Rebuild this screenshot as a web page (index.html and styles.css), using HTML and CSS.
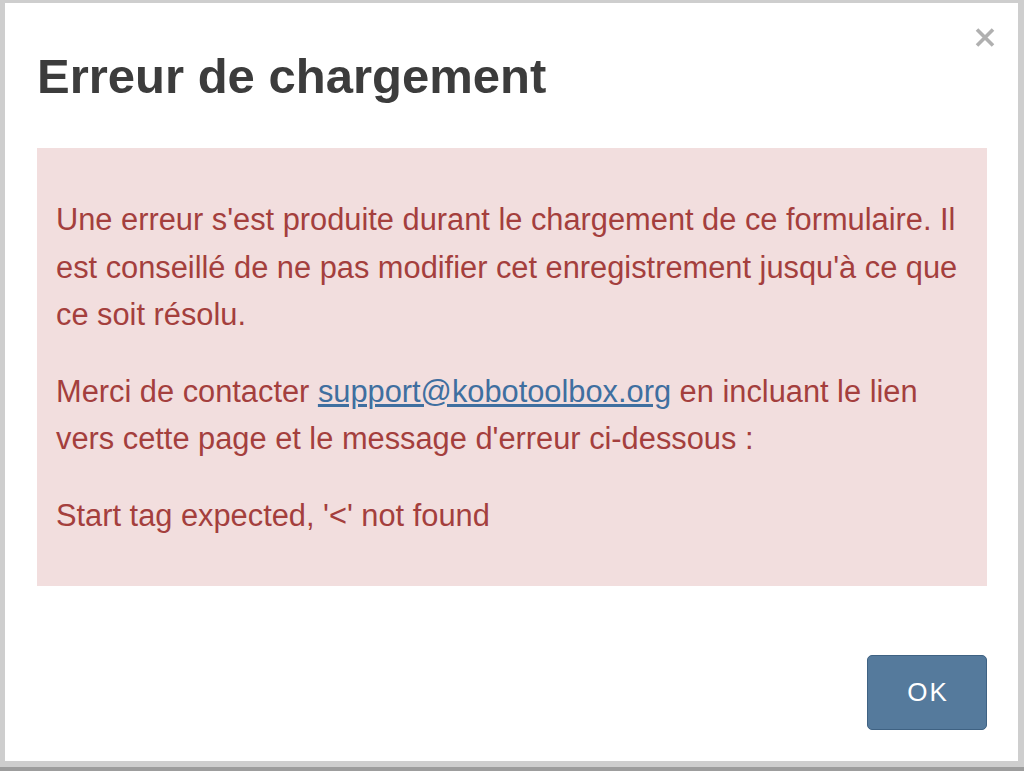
FILE: index.html
```html
<!DOCTYPE html>
<html lang="fr">
<head>
<meta charset="utf-8">
<title>Erreur de chargement</title>
<link rel="stylesheet" href="styles.css">
</head>
<body>
<div class="screen">
  <div class="dialog">
    <button class="close" aria-label="Fermer">
      <svg width="20" height="19" viewBox="0 0 20 19"><path d="M2 1.5 L18 17.5 M18 1.5 L2 17.5" stroke="#b0b0b0" stroke-width="3.6" fill="none"/></svg>
    </button>
    <h1 class="title">Erreur de chargement</h1>
    <div class="alert">
      <p>Une erreur s'est produite durant le chargement de ce formulaire. Il est conseillé de ne pas modifier cet enregistrement jusqu'à ce que ce soit résolu.</p>
      <p>Merci de contacter <a href="#">support@kobotoolbox.org</a> en incluant le lien vers cette page et le message d'erreur ci-dessous :</p>
      <p>Start tag expected, '&lt;' not found</p>
    </div>
    <div class="footer">
      <button class="ok">OK</button>
    </div>
  </div>
</div>
</body>
</html>
```
FILE: styles.css
```css
html, body {
  margin: 0;
  padding: 0;
}
body {
  width: 1024px;
  height: 771px;
  overflow: hidden;
  font-family: "Liberation Sans", Arial, sans-serif;
}
.screen {
  box-sizing: border-box;
  height: 771px;
  background: #cecece;
  border-bottom: 4px solid #9d9d9d;
  padding: 3px 6px 0 5px;
}
.dialog {
  position: relative;
  box-sizing: border-box;
  height: 758px;
  background: #ffffff;
  padding: 0 31px 0 32px;
  display: flex;
  flex-direction: column;
}
.close {
  position: absolute;
  top: 25px;
  right: 23px;
  border: 0;
  background: none;
  padding: 0;
  width: 20px;
  height: 19px;
  cursor: pointer;
}
.close svg { display: block; }
.title {
  margin: 42px 0 0 0;
  font-size: 49px;
  line-height: 63px;
  font-weight: bold;
  color: #3c3c3c;
}
.alert {
  margin-top: 40px;
  background: #f2dede;
  color: #a43f3d;
  padding: 48px 15px 18px 19px;
  font-size: 30.8px;
  line-height: 47.5px;
}
.alert p {
  margin: 0 0 29px 0;
}
.alert a {
  color: #3f6fa0;
  text-decoration: underline;
}
.footer {
  display: flex;
  justify-content: flex-end;
  margin-top: 69px;
}
.ok {
  width: 120px;
  height: 75px;
  background: #557a9c;
  border: 1px solid #3f6283;
  border-radius: 5px;
  color: #ffffff;
  font-family: "Liberation Sans", Arial, sans-serif;
  font-size: 26px;
  letter-spacing: 2px;
  padding: 0 0 0 2px;
  cursor: pointer;
}
```
